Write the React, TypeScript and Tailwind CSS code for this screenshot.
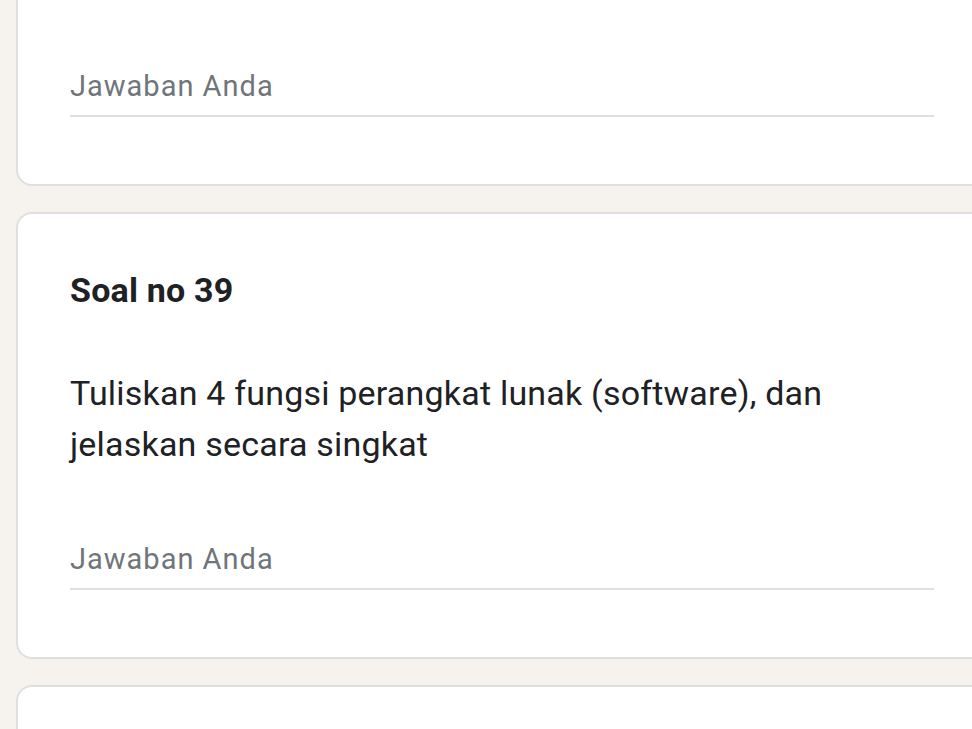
import React from "react";

function Answer() {
  return (
    <div className="w-[864px] border-b-2 border-[#e0e0e0] pb-[15px]">
      <div className="text-[29px] leading-[28px] text-[#70757a] tracking-[1px]">Jawaban Anda</div>
    </div>
  );
}

export default function App() {
  return (
    <div
      className="w-[972px] h-[729px] overflow-hidden bg-[#f6f3ef]"
      style={{ fontFamily: "Roboto, 'Noto Sans', sans-serif" }}
    >
      <div className="flex flex-col gap-[26px] pl-[16px] -mt-[100px]">
        <div className="w-[1000px] bg-white border-2 border-[#e0dfdf] rounded-[16px] pl-[52px] pt-[170px] pb-[67px]">
          <Answer />
        </div>
        <div className="w-[1000px] bg-white border-2 border-[#e0dfdf] rounded-[16px] pl-[52px] pt-[58px] pb-[67px]">
          <div className="text-[34px] leading-[36px] font-bold text-[#202124] tracking-[0.2px]">Soal no 39</div>
          <div className="mt-[60px] text-[34px] leading-[51px] text-[#202124] tracking-[0.2px] w-[820px]">
            Tuliskan 4 fungsi perangkat lunak (software), dan jelaskan secara singkat
          </div>
          <div className="mt-[75px]">
            <Answer />
          </div>
        </div>
        <div className="w-[1000px] h-[200px] bg-white border-2 border-[#e0dfdf] rounded-[16px]" />
      </div>
    </div>
  );
}
